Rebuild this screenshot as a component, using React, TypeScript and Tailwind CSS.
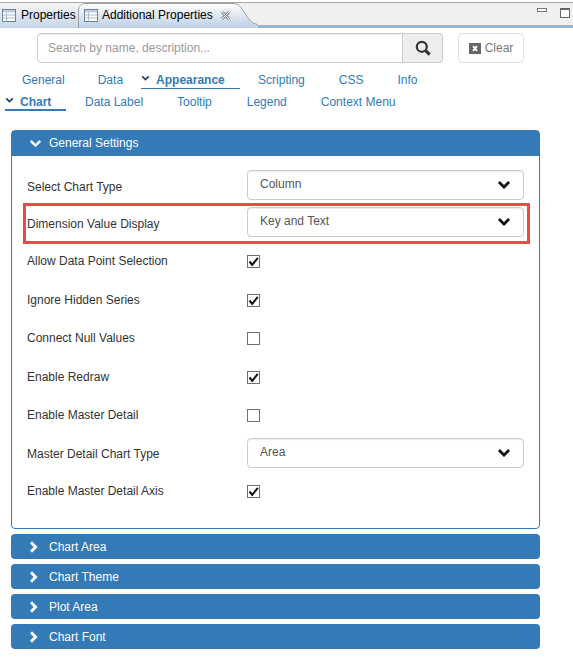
const TableIcon = () => (
  <svg width="14" height="13" viewBox="0 0 14 13" className="shrink-0">
    <rect x="0.5" y="0.5" width="13" height="12" fill="#fff" stroke="#6f8296" />
    <rect x="1" y="1" width="12" height="2.5" fill="#b9cde2" />
    <path d="M1 6h12M1 9h12M4.5 3.5v9" stroke="#a9bacb" fill="none" />
  </svg>
);

const ChevDown = ({ size, className }: { size: number; className?: string }) => (
  <svg width={size} height={size * 0.7} viewBox="0 0 14 10" className={className}>
    <path d="M1.8 2 7 7.2 12.2 2" stroke="currentColor" strokeWidth="2.8" fill="none" />
  </svg>
);

const ChevRight = () => (
  <svg width="9" height="12" viewBox="0 0 9 12" className="shrink-0">
    <path d="M2 1.2 6.6 6 2 10.8" stroke="currentColor" strokeWidth="2.9" fill="none" />
  </svg>
);

const Check = ({ checked }: { checked: boolean }) => (
  <div className="w-[13px] h-[13px] mt-[1px] border border-[#707070] bg-white relative shrink-0">
    {checked && (
      <svg width="13" height="13" viewBox="0 0 13 13" className="absolute -top-px -left-px">
        <path d="M2.5 6.5 5.2 9.8 10.8 2.8" stroke="#111" strokeWidth="2" fill="none" />
      </svg>
    )}
  </div>
);

const Select = ({ value }: { value: string }) => (
  <div className="ml-auto w-[277px] h-[30px] bg-white border border-[#cccccc] rounded-[4px] flex items-center justify-between pl-3 pr-[12px] pb-[2px] text-[12px] text-[#555555] shadow-[inset_0_1px_1px_rgba(0,0,0,0.075)]">
    <span>{value}</span>
    <ChevDown size={14} className="text-[#111] mt-[2px]" />
  </div>
);

const Row = ({ label, h, pad, children }: { label: string; h: string; pad?: string; children: React.ReactNode }) => (
  <div className={`flex items-center ${h}`}>
    <span className={`w-[220px] shrink-0 text-[12px] text-[#333333] ${pad ?? ""}`}>{label}</span>
    {children}
  </div>
);

const Section = ({ title }: { title: string }) => (
  <div className="h-[25px] mt-[5px] bg-[#337ab7] rounded-[4px] flex items-center pl-[18px] text-[12px] text-white">
    <ChevRight />
    <span className="ml-[11px]">{title}</span>
  </div>
);

export default function App() {
  return (
    <main className="w-[573px] h-[663px] bg-white overflow-hidden font-['Liberation_Sans',Arial,sans-serif]">
      {/* Eclipse view tabs */}
      <div className="h-[28px] pt-[2px] bg-white">
        <div className="h-[26px] bg-[#f0f0f0] border-t border-[#a8a8a8] border-b-[3px] border-b-[#9bb3cf] flex">
          <div className="w-[78px] h-[25px] flex items-center pl-[2px] gap-[5px] text-[12px] text-black bg-gradient-to-b from-[#f5f5f5] to-[#c6d6e8]">
            <TableIcon />
            <span className="pb-[1px]">Properties</span>
          </div>
          <div className="w-[181px] h-[25px] relative flex items-center pl-[6px] gap-[4px] text-[12px] text-black">
            <svg width="181" height="25" viewBox="0 0 181 25" className="absolute left-0 top-0">
              <defs>
                <linearGradient id="tabFill" x1="0" y1="0" x2="0" y2="1">
                  <stop offset="0" stopColor="#ffffff" />
                  <stop offset="1" stopColor="#bccfe4" />
                </linearGradient>
              </defs>
              <path d="M0 25V8C0 3 3 0.5 8 0.5H156C166 0.5 168 21 180 21.5V25Z" fill="url(#tabFill)" />
              <path d="M0.5 25V8C0.5 3 3 0.5 8 0.5H156C166 0.5 168 21 180 21.5" fill="none" stroke="#a0a0a0" />
            </svg>
            <span className="relative"><TableIcon /></span>
            <span className="relative pb-[1px]">Additional Properties</span>
            <svg width="11" height="11" viewBox="0 0 11 11" className="relative ml-[3px]">
              <path d="M2 2 9 9M9 2 2 9" stroke="#8a8a8a" strokeWidth="3" fill="none" />
              <path d="M2 2 9 9M9 2 2 9" stroke="#fff" strokeWidth="1" fill="none" />
            </svg>
          </div>
          <div className="ml-auto flex items-start gap-[13px] pr-[3px] pt-[5px]">
            <div className="w-[10px] h-[4px] border border-[#777] bg-white" />
            <div className="w-[10px] h-[10px] border border-[#666] border-t-2 bg-white" />
          </div>
        </div>
      </div>

      {/* Search */}
      <div className="flex mt-[5px] pl-[37px] h-[30px]">
        <div className="w-[366px] border border-[#cccccc] rounded-l-[4px] flex items-center pl-[10px] text-[12px] text-[#999999] shadow-[inset_0_1px_1px_rgba(0,0,0,0.075)]">
          Search by name, description...
        </div>
        <div className="w-[40px] border border-l-0 border-[#cccccc] rounded-r-[4px] bg-[#eeeeee] flex items-center justify-center">
          <svg width="16" height="16" viewBox="0 0 16 16">
            <circle cx="6.8" cy="6.8" r="5" stroke="#333" strokeWidth="2.2" fill="none" />
            <path d="M10.6 10.6 14.6 14.6" stroke="#333" strokeWidth="3" />
          </svg>
        </div>
        <div className="ml-[15px] w-[66px] border border-[#e2e2e2] rounded-[4px] flex items-center justify-center gap-[4px] text-[12px] text-[#777]">
          <svg width="12" height="11" viewBox="0 0 12 11">
            <rect width="12" height="11" fill="#666" />
            <path d="M4 3.2 8 7.8M8 3.2 4 7.8" stroke="#fff" strokeWidth="1.8" />
          </svg>
          Clear
        </div>
      </div>

      {/* Tabs */}
      <nav className="flex items-start mt-[8px] h-[17px] pl-[22px] text-[12px] text-[#337ab7]">
        <span>General</span>
        <span className="ml-[33px]">Data</span>
        <div className="ml-[18px] w-[99px] h-[18px] border-b border-[#337ab7] flex items-start">
          <ChevDown size={9} className="text-[#23405f] mt-[4px]" />
          <span className="ml-[6px] font-bold">Appearance</span>
        </div>
        <span className="ml-[18px]">Scripting</span>
        <span className="ml-[34px]">CSS</span>
        <span className="ml-[34px]">Info</span>
      </nav>
      <nav className="flex items-start mt-[5px] h-[18px] pl-[5px] text-[12px] text-[#337ab7]">
        <div className="w-[61px] h-[18px] border-b-2 border-[#337ab7] flex items-start">
          <ChevDown size={9} className="text-[#23405f] mt-[4px]" />
          <span className="ml-[6px] font-bold">Chart</span>
        </div>
        <span className="ml-[19px]">Data Label</span>
        <span className="ml-[34px]">Tooltip</span>
        <span className="ml-[35px]">Legend</span>
        <span className="ml-[34px]">Context Menu</span>
      </nav>

      {/* Panels */}
      <div className="mx-[11px] w-[529px] mt-[19px]">
        <div className="h-[399px] border border-[#337ab7] rounded-[4px] relative">
          <div className="h-[25px] bg-[#337ab7] flex items-center pl-[17px] text-[12px] text-white">
            <ChevDown size={13} />
            <span className="ml-[7px] pb-[1px]">General Settings</span>
          </div>
          <div className="pl-[15px] pr-[15px] pt-[14px]">
            <Row label="Select Chart Type" h="h-[30px]" pad="pt-[3px]"><Select value="Column" /></Row>
            <div className="h-[7px]" />
            <Row label="Dimension Value Display" h="h-[30px]" pad="pt-[3px]"><Select value="Key and Text" /></Row>
            <div className="h-[5px]" />
            <Row label="Allow Data Point Selection" h="h-[38px]"><Check checked /></Row>
            <Row label="Ignore Hidden Series" h="h-[39px]"><Check checked /></Row>
            <Row label="Connect Null Values" h="h-[38px]"><Check checked={false} /></Row>
            <Row label="Enable Redraw" h="h-[39px]"><Check checked /></Row>
            <Row label="Enable Master Detail" h="h-[38px]"><Check checked={false} /></Row>
            <Row label="Master Detail Chart Type" h="h-[38px]" pad="pt-[2px]"><Select value="Area" /></Row>
            <Row label="Enable Master Detail Axis" h="h-[38px]"><Check checked /></Row>
          </div>
          {/* red annotation box */}
          <div className="absolute left-[11px] top-[72px] w-[507px] h-[41px] border-[3px] border-[#ec4a48]" />
        </div>
        <Section title="Chart Area" />
        <Section title="Chart Theme" />
        <Section title="Plot Area" />
        <Section title="Chart Font" />
      </div>
    </main>
  );
}
